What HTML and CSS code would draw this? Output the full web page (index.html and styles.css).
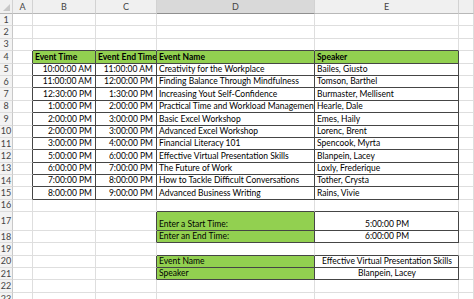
FILE: index.html
```html
<!DOCTYPE html>
<html>
<head>
<meta charset="utf-8">
<link rel="stylesheet" href="styles.css">
</head>
<body>
<table class="sheet">
<colgroup>
<col class="w-rh"><col class="w-a"><col class="w-b"><col class="w-c"><col class="w-d"><col class="w-e"><col class="w-f">
</colgroup>
<tr class="hdr"><th class="corner"><span class="tri"></span></th><th class="ch">A</th><th class="ch">B</th><th class="ch">C</th><th class="ch sel">D</th><th class="ch">E</th><th class="ch"></th></tr>
<tr><td class="rh">1</td><td></td><td></td><td></td><td></td><td></td><td></td></tr>
<tr><td class="rh">2</td><td></td><td></td><td></td><td></td><td></td><td></td></tr>
<tr><td class="rh">3</td><td></td><td class="bt"></td><td class="bt"></td><td class="bt"></td><td class="bt"></td><td></td></tr>
<tr><td class="rh">4</td><td class="bl"></td><td class="b g bold">Event Time</td><td class="b g bold">Event End Time</td><td class="b g bold">Event Name</td><td class="b g bold">Speaker</td><td></td></tr>
<tr><td class="rh">5</td><td class="bl"></td><td class="b r">10:00:00 AM</td><td class="b r">11:00:00 AM</td><td class="b">Creativity for the Workplace</td><td class="b">Bailes, Giusto</td><td></td></tr>
<tr><td class="rh">6</td><td class="bl"></td><td class="b r">11:00:00 AM</td><td class="b r">12:00:00 PM</td><td class="b">Finding Balance Through Mindfulness</td><td class="b">Tomson, Barthel</td><td></td></tr>
<tr><td class="rh">7</td><td class="bl"></td><td class="b r">12:30:00 PM</td><td class="b r">1:30:00 PM</td><td class="b">Increasing Yout Self-Confidence</td><td class="b">Burmaster, Mellisent</td><td></td></tr>
<tr><td class="rh">8</td><td class="bl"></td><td class="b r">1:00:00 PM</td><td class="b r">2:00:00 PM</td><td class="b">Practical Time and Workload Management</td><td class="b">Hearle, Dale</td><td></td></tr>
<tr><td class="rh">9</td><td class="bl"></td><td class="b r">2:00:00 PM</td><td class="b r">3:00:00 PM</td><td class="b">Basic Excel Workshop</td><td class="b">Emes, Haily</td><td></td></tr>
<tr><td class="rh">10</td><td class="bl"></td><td class="b r">2:00:00 PM</td><td class="b r">3:00:00 PM</td><td class="b">Advanced Excel Workshop</td><td class="b">Lorenc, Brent</td><td></td></tr>
<tr><td class="rh">11</td><td class="bl"></td><td class="b r">3:00:00 PM</td><td class="b r">4:00:00 PM</td><td class="b">Financial Literacy 101</td><td class="b">Spencook, Myrta</td><td></td></tr>
<tr><td class="rh">12</td><td class="bl"></td><td class="b r">5:00:00 PM</td><td class="b r">6:00:00 PM</td><td class="b">Effective Virtual Presentation Skills</td><td class="b">Blanpein, Lacey</td><td></td></tr>
<tr><td class="rh">13</td><td class="bl"></td><td class="b r">6:00:00 PM</td><td class="b r">7:00:00 PM</td><td class="b">The Future of Work</td><td class="b">Loxly, Frederique</td><td></td></tr>
<tr><td class="rh">14</td><td class="bl"></td><td class="b r">7:00:00 PM</td><td class="b r">8:00:00 PM</td><td class="b">How to Tackle Difficult Conversations</td><td class="b">Tother, Crysta</td><td></td></tr>
<tr><td class="rh">15</td><td class="bl"></td><td class="b r">8:00:00 PM</td><td class="b r">9:00:00 PM</td><td class="b">Advanced Business Writing</td><td class="b">Rains, Vivie</td><td></td></tr>
<tr class="r16"><td class="rh">16</td><td></td><td></td><td></td><td class="bt"></td><td class="bt"></td><td></td></tr>
<tr class="r17"><td class="rh">17</td><td></td><td></td><td class="bl"></td><td class="b g">Enter a Start Time:</td><td class="b c">5:00:00 PM</td><td></td></tr>
<tr><td class="rh">18</td><td></td><td></td><td class="bl"></td><td class="b g">Enter an End Time:</td><td class="b c">6:00:00 PM</td><td></td></tr>
<tr><td class="rh">19</td><td></td><td></td><td></td><td class="bt"></td><td class="bt"></td><td></td></tr>
<tr><td class="rh">20</td><td></td><td></td><td class="bl"></td><td class="b g">Event Name</td><td class="b c">Effective Virtual Presentation Skills</td><td></td></tr>
<tr><td class="rh">21</td><td></td><td></td><td class="bl"></td><td class="b g">Speaker</td><td class="b c">Blanpein, Lacey</td><td></td></tr>
<tr><td class="rh">22</td><td></td><td></td><td></td><td></td><td></td><td></td></tr>
<tr><td class="rh">23</td><td></td><td></td><td></td><td></td><td></td><td></td></tr>
</table>
</body>
</html>
```
FILE: styles.css
```css
html, body {
  margin: 0;
  padding: 0;
  background: #ffffff;
  overflow: hidden;
}
.sheet {
  table-layout: fixed;
  border-collapse: separate;
  border-spacing: 0;
  width: 474px;
  font-family: Lato, "Liberation Sans", sans-serif;
  font-size: 8.5px;
  color: #000;
}
.w-rh { width: 13px; }
.w-a { width: 20px; }
.w-b { width: 63px; }
.w-c { width: 61px; }
.w-d { width: 158px; }
.w-e { width: 144px; }
.w-f { width: 15px; }
.sheet tr { height: 12.4px; }
.sheet tr.hdr { height: 14px; }
.sheet tr.r16 { height: 12px; }
.sheet tr.r17 { height: 19px; }
.sheet td {
  padding: 0 1px 1px 2px;
  line-height: 10px;
  vertical-align: bottom;
  white-space: nowrap;
  overflow: hidden;
  border-right: 1px solid #dedede;
  border-bottom: 1px solid #dedede;
}
.sheet th {
  padding: 0;
  font-weight: normal;
  font-size: 9px;
  color: #444;
  line-height: 12px;
  vertical-align: middle;
  background: #f0f0f0;
  border-right: 1px solid #d2d2d2;
  border-bottom: 1px solid #b8b8b8;
}
.ch.sel {
  background: #d9d9d9;
  border-bottom: 1px solid #8f8f8f;
}
.corner {
  position: relative;
}
.tri {
  position: absolute;
  right: 2px;
  bottom: 2px;
  width: 0;
  height: 0;
  border-left: 7px solid transparent;
  border-bottom: 7px solid #c8c8c8;
}
.sheet td.rh {
  padding: 0;
  font-size: 9px;
  text-align: center;
  vertical-align: middle;
  color: #444;
  background: #f3f3f3;
  border-right: 1px solid #c8c8c8;
  border-bottom: 1px solid #dcdcdc;
}
.sheet td.b {
  border-right: 1px solid #454545;
  border-bottom: 1px solid #454545;
}
.sheet td.bl { border-right: 1px solid #454545; }
.sheet td.bt { border-bottom: 1px solid #454545; }
.g { background: #92d050; }
.bold { font-weight: bold; }
.r { text-align: right; }
.c { text-align: center; }
.sheet td.r { padding-right: 3px; }
```
